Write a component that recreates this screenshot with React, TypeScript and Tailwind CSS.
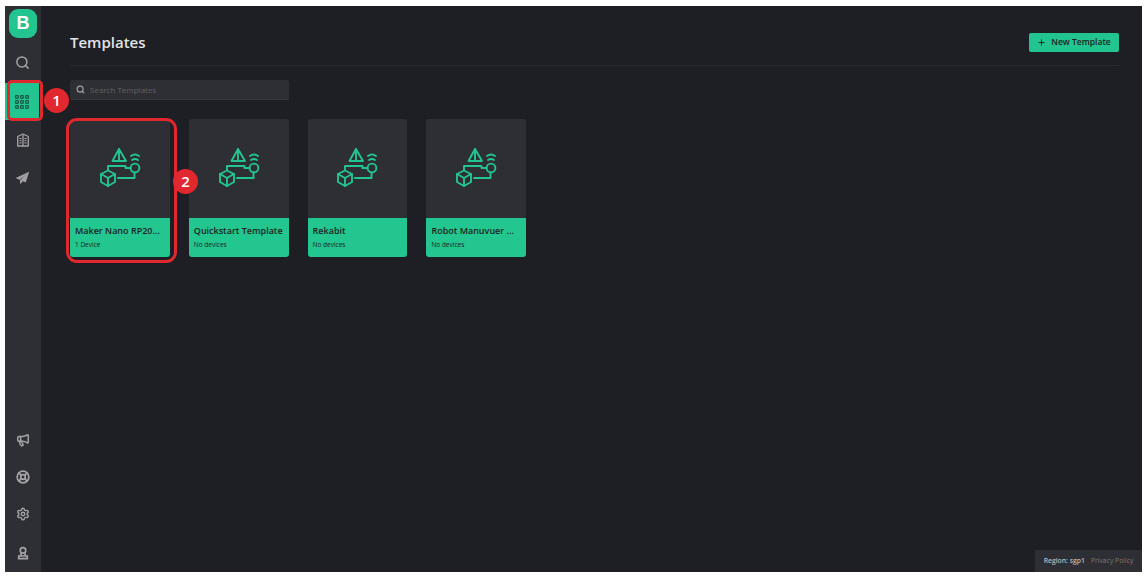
import React from 'react';
import { Search, Plus, Megaphone, LifeBuoy, Settings } from 'lucide-react';

const templates = [
  { name: 'Maker Nano RP20...', sub: '1 Device' },
  { name: 'Quickstart Template', sub: 'No devices' },
  { name: 'Rekabit', sub: 'No devices' },
  { name: 'Robot Manuvuer ...', sub: 'No devices' },
];

const TemplateIcon = () => (
  <svg width="42" height="40" viewBox="0 0 42 40" fill="none" stroke="#22c58f" strokeWidth="1.9" strokeLinejoin="round" strokeLinecap="round">
    <path d="M19 1 L12.5 13 H26 Z" />
    <path d="M19 1 V13" />
    <path d="M1 26 L8 22.5 L15 26 V34 L8 38 L1 34 Z" />
    <path d="M1 26 L8 30 L15 26 M8 30 V38" />
    <path d="M8 22 V18 H25.5 V20 H30.5" />
    <circle cx="35" cy="20" r="4.4" />
    <path d="M18 30 H34.5 V24.5" />
    <path d="M32 12 Q35 10 38 12" />
    <path d="M31 8 Q35 5 39 8" />
  </svg>
);

const GridIcon = () => (
  <svg width="14" height="14" viewBox="0 0 14 14" fill="none" stroke="#1a5c48" strokeWidth="1.3">
    {[0, 5, 10].map((y) =>
      [0, 5, 10].map((x) => <rect key={`${x}-${y}`} x={x + 0.6} y={y + 0.6} width="2.8" height="2.8" rx="0.8" />)
    )}
  </svg>
);

const BookIcon = () => (
  <svg width="12" height="14" viewBox="0 0 12 14" fill="none" stroke="#a3a3a6" strokeWidth="1.3" strokeLinejoin="round">
    <path d="M0.7 3.5 L6 1 L11.3 3.5 V13 H0.7 Z" />
    <path d="M6 2 V13" />
    <path d="M2.3 5.5 H4.6 M2.3 7.8 H4.6 M2.3 10 H4.6 M7.4 5.5 H9.7 M7.4 7.8 H9.7 M7.4 10 H9.7" strokeWidth="1" />
  </svg>
);

const PlaneIcon = () => (
  <svg width="13" height="12" viewBox="0 0 13 12" fill="#a3a3a6" stroke="#a3a3a6" strokeWidth="0.8" strokeLinejoin="round">
    <path d="M12.5 0.5 L0.5 6 L3.7 7.4 Z" />
    <path d="M12.5 0.5 L5 8 L9.5 10 Z" />
    <path d="M4.5 8 V11.5 L6.4 9.4 Z" />
  </svg>
);

const AgentIcon = () => (
  <svg width="12" height="14" viewBox="0 0 14 15" fill="none" stroke="#a3a3a6" strokeWidth="2">
    <circle cx="7" cy="4.5" r="3.2" />
    <path d="M2 14 V11 H12 V14 Z" />
    <path d="M5 8 L4 11 M9 8 L10 11" />
  </svg>
);

const Marker = ({ n, className }: { n: number; className: string }) => (
  <div className={`absolute w-[25px] h-[25px] rounded-full bg-[#e0282e] text-white text-[15px] font-semibold flex items-center justify-center ${className}`}>
    {n}
  </div>
);

export default function App() {
  return (
    <div className="relative h-[580px] w-[1147px] bg-white pl-[5px] pr-[5px] pt-[6px] pb-[8px] overflow-hidden font-['Open_Sans',sans-serif]">
      <div className="flex h-full bg-[#1e1f24]">
        <aside className="w-[36px] shrink-0 bg-[#2e2f34] flex flex-col items-center text-[#a3a3a6]">
          <div className="mt-[3px] w-[28px] h-[29px] shrink-0 rounded-[9px] bg-[#22c58f] text-white font-bold text-[18px] flex items-center justify-center font-['Liberation_Sans',sans-serif]">
            B
          </div>
          <div className="mt-[16px] h-[16px] flex items-center pr-[1px]">
            <Search size={15} strokeWidth={2.4} />
          </div>
          <div className="mt-[13px] w-[34px] self-start h-[37px] bg-[#22c58f] flex items-center justify-center">
            <GridIcon />
          </div>
          <div className="mt-[12px] h-[16px] flex items-center pr-[1px]">
            <BookIcon />
          </div>
          <div className="mt-[22px] h-[16px] flex items-center pr-[1px]">
            <PlaneIcon />
          </div>
          <div className="mt-auto flex flex-col items-center gap-[23px] pb-[12px] pr-[1px]">
            <Megaphone size={14} strokeWidth={2.6} />
            <LifeBuoy size={14} strokeWidth={3} />
            <Settings size={14} strokeWidth={2.4} />
            <div className="mt-[2px] flex">
              <AgentIcon />
            </div>
          </div>
        </aside>

        <main className="relative flex-1 pl-[29px] pr-[23px]">
          <header className="flex items-center justify-between h-[60px] pt-[14px] border-b border-[#2a2b30]">
            <h1 className="text-[15px] font-semibold text-[#e4e4e6]">Templates</h1>
            <button className="w-[90px] h-[19px] rounded-[2px] bg-[#22c58f] text-[#1e1f24] text-[8.5px] font-semibold flex items-center justify-center gap-[5px]">
              <Plus size={9} strokeWidth={2.5} />
              New Template
            </button>
          </header>

          <div className="mt-[14px] w-[219px] h-[20px] rounded-[2px] bg-[#2e2f34] border-b border-[#3a3b40] flex items-center gap-[5px] px-[6px]">
            <Search size={9} strokeWidth={3} className="text-[#a3a3a6]" />
            <span className="text-[8px] text-[#5f6065]">Search Templates</span>
          </div>

          <div className="mt-[19px] flex gap-[19px]">
            {templates.map((t) => (
              <div key={t.name} className="w-[99.8px] h-[138px] rounded-[3px] overflow-hidden flex flex-col">
                <div className="h-[99px] bg-[#2e2f34] flex items-center justify-center pb-[2px] pl-[2px]">
                  <TemplateIcon />
                </div>
                <div className="flex-1 bg-[#24c68f] text-[#1e1f24] pl-[5px] pt-[7px]">
                  <div className="text-[9px] leading-[12px] font-semibold whitespace-nowrap">{t.name}</div>
                  <div className="text-[6.5px] leading-[9px] mt-[3px]">{t.sub}</div>
                </div>
              </div>
            ))}
          </div>

          <footer className="absolute right-0 bottom-0 w-[107px] h-[22px] bg-[#2e2f34] flex items-center justify-center gap-[6px] text-[6.8px] whitespace-nowrap">
            <span className="text-[#b8b8ba] font-semibold">Region: sgp1</span>
            <span className="text-[#77787d]">Privacy Policy</span>
          </footer>
        </main>
      </div>

      <div className="absolute left-[7px] top-[80px] w-[36px] h-[41px] rounded-[5px] border-[3px] border-[#e0282e]" />
      <Marker n={1} className="left-[44px] top-[88px]" />
      <div className="absolute left-[66px] top-[118px] w-[111px] h-[145px] rounded-[11px] border-[3px] border-[#e0282e]" />
      <Marker n={2} className="left-[173px] top-[169px]" />
    </div>
  );
}
